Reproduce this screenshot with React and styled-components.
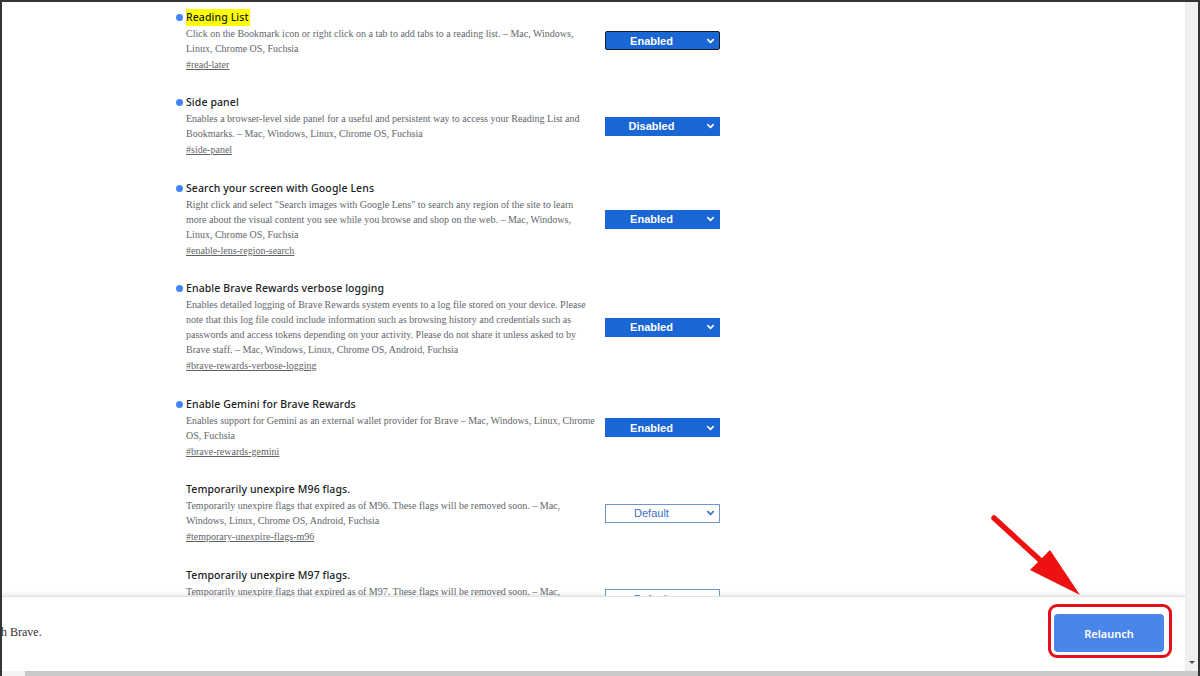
import React from 'react';
import styled, { createGlobalStyle } from 'styled-components';
import { ChevronDown } from 'lucide-react';

const GlobalStyle = createGlobalStyle`
  html, body {
    margin: 0;
    padding: 0;
    background: #ffffff;
  }
`;

const Window = styled.div`
  width: 1200px;
  height: 676px;
  box-sizing: border-box;
  border-top: 2px solid #343434;
  border-left: 2px solid #343434;
  border-right: 2px solid #343434;
  display: flex;
  flex-direction: column;
  overflow: hidden;
  position: relative;
  background: #ffffff;
`;

const Body = styled.div`
  flex: 1;
  min-height: 0;
  display: flex;
`;

const Page = styled.div`
  flex: 1;
  min-width: 0;
  display: flex;
  flex-direction: column;
`;

const FlagList = styled.div`
  flex: 1;
  min-height: 0;
  overflow: hidden;
  padding: 6.5px 0 0 184px;
  display: flex;
  flex-direction: column;
  gap: 22.5px;
`;

const Flag = styled.div`
  display: grid;
  grid-template-columns: 410px 115px;
  column-gap: 9px;
  grid-template-areas:
    "title ."
    "desc select"
    "link .";
`;

const Title = styled.div`
  grid-area: title;
  position: relative;
  font-family: "Noto Sans", sans-serif;
  font-size: 10.5px;
  font-weight: 500;
  line-height: 17px;
  letter-spacing: 0.1px;
  color: #202124;

  ${(p) => p.$active && `
    &::before {
      content: "";
      position: absolute;
      left: -10px;
      top: 5px;
      width: 7px;
      height: 7px;
      border-radius: 50%;
      background: #4285f4;
    }
  `}
`;

const Highlight = styled.span`
  background: #ffff00;
  padding: 1px 1px 2px 0;
`;

const Description = styled.div`
  grid-area: desc;
  font-family: "Liberation Serif", serif;
  font-size: 10px;
  line-height: 15px;
  color: #62666b;
`;

const Link = styled.a`
  grid-area: link;
  justify-self: start;
  margin-top: 1px;
  font-family: "Liberation Serif", serif;
  font-size: 10px;
  line-height: 15px;
  color: #5f6368;
  text-decoration: underline;
`;

const Select = styled.div`
  grid-area: select;
  align-self: center;
  box-sizing: border-box;
  height: 19px;
  display: flex;
  align-items: center;
  position: relative;
  padding-right: 22px;
  font-family: "Liberation Sans", Arial, sans-serif;
  font-size: 11px;
  font-weight: ${(p) => (p.$default ? 400 : 700)};
  color: ${(p) => (p.$default ? '#3b6fc6' : '#ffffff')};
  background: ${(p) => (p.$default ? '#ffffff' : '#1a66d5')};
  border: ${(p) =>
    p.$focused ? '1.5px solid #1b1b24' : p.$default ? '1px solid #6f95d4' : '1px solid #1a66d5'};
  border-radius: ${(p) => (p.$focused ? '2px' : '0')};

  span {
    flex: 1;
    text-align: center;
  }

  svg {
    position: absolute;
    right: 3px;
    top: 50%;
    transform: translateY(-50%);
  }
`;

const BottomBar = styled.div`
  height: 75px;
  flex-shrink: 0;
  box-sizing: border-box;
  border-top: 1px solid #e2e2e2;
  box-shadow: 0 -2px 3px rgba(0, 0, 0, 0.08);
  display: flex;
  align-items: center;
  justify-content: space-between;
  padding-right: 13px;
  background: #ffffff;
`;

const BarText = styled.div`
  font-family: "Liberation Serif", serif;
  font-size: 12px;
  color: #333333;
  margin: -3px 0 0 -1px;
`;

const RedOutline = styled.div`
  border: 3px solid #e3101a;
  border-radius: 9px;
  padding: 7px 5px 3px 3px;
  margin-top: -6px;
`;

const RelaunchButton = styled.button`
  width: 110px;
  height: 38px;
  border: none;
  border-radius: 4px;
  background: #4a86ea;
  color: #ffffff;
  font-family: "Noto Sans", sans-serif;
  font-size: 11px;
  font-weight: 600;
  cursor: pointer;
`;

const VScroll = styled.div`
  width: 13px;
  flex-shrink: 0;
  background: #f1f1f1;
  border-left: 1px solid #ececec;
  display: flex;
  flex-direction: column;
  justify-content: flex-end;
  align-items: center;
  padding-bottom: 7px;
  box-sizing: border-box;
`;

const ScrollArrow = styled.div`
  width: 0;
  height: 0;
  border-left: 3px solid transparent;
  border-right: 3px solid transparent;
  border-top: 3px solid #505050;
`;

const HScroll = styled.div`
  height: 5px;
  flex-shrink: 0;
  background: #f3f3f3;
  padding-left: 23px;
  display: flex;
`;

const HThumb = styled.div`
  flex: 1;
  background: #c9c9c9;
`;

const Arrow = styled.svg`
  position: absolute;
  left: 983px;
  top: 507px;
  pointer-events: none;
`;

const flags = [
  {
    title: 'Reading List',
    marked: true,
    active: true,
    desc: 'Click on the Bookmark icon or right click on a tab to add tabs to a reading list. – Mac, Windows, Linux, Chrome OS, Fuchsia',
    link: '#read-later',
    value: 'Enabled',
    focused: true,
  },
  {
    title: 'Side panel',
    active: true,
    desc: 'Enables a browser-level side panel for a useful and persistent way to access your Reading List and Bookmarks. – Mac, Windows, Linux, Chrome OS, Fuchsia',
    link: '#side-panel',
    value: 'Disabled',
  },
  {
    title: 'Search your screen with Google Lens',
    active: true,
    desc: 'Right click and select "Search images with Google Lens" to search any region of the site to learn more about the visual content you see while you browse and shop on the web. – Mac, Windows, Linux, Chrome OS, Fuchsia',
    link: '#enable-lens-region-search',
    value: 'Enabled',
  },
  {
    title: 'Enable Brave Rewards verbose logging',
    active: true,
    desc: 'Enables detailed logging of Brave Rewards system events to a log file stored on your device. Please note that this log file could include information such as browsing history and credentials such as passwords and access tokens depending on your activity. Please do not share it unless asked to by Brave staff. – Mac, Windows, Linux, Chrome OS, Android, Fuchsia',
    link: '#brave-rewards-verbose-logging',
    value: 'Enabled',
  },
  {
    title: 'Enable Gemini for Brave Rewards',
    active: true,
    desc: 'Enables support for Gemini as an external wallet provider for Brave – Mac, Windows, Linux, Chrome OS, Fuchsia',
    link: '#brave-rewards-gemini',
    value: 'Enabled',
  },
  {
    title: 'Temporarily unexpire M96 flags.',
    desc: 'Temporarily unexpire flags that expired as of M96. These flags will be removed soon. – Mac, Windows, Linux, Chrome OS, Android, Fuchsia',
    link: '#temporary-unexpire-flags-m96',
    value: 'Default',
  },
  {
    title: 'Temporarily unexpire M97 flags.',
    desc: 'Temporarily unexpire flags that expired as of M97. These flags will be removed soon. – Mac, Windows, Linux, Chrome OS, Android, Fuchsia',
    link: '#temporary-unexpire-flags-m97',
    value: 'Default',
  },
];

const App = () => {
  return (
    <>
      <GlobalStyle />
      <Window>
        <Body>
          <Page>
            <FlagList>
              {flags.map((f) => {
                const isDefault = f.value === 'Default';
                return (
                  <Flag key={f.link}>
                    <Title $active={f.active}>
                      {f.marked ? <Highlight>{f.title}</Highlight> : f.title}
                    </Title>
                    <Description>{f.desc}</Description>
                    <Link href={f.link}>{f.link}</Link>
                    <Select $default={isDefault} $focused={f.focused}>
                      <span>{f.value}</span>
                      <ChevronDown size={11} strokeWidth={3.5} />
                    </Select>
                  </Flag>
                );
              })}
            </FlagList>
            <BottomBar>
              <BarText>h Brave.</BarText>
              <RedOutline>
                <RelaunchButton>Relaunch</RelaunchButton>
              </RedOutline>
            </BottomBar>
          </Page>
          <VScroll>
            <ScrollArrow />
          </VScroll>
        </Body>
        <HScroll>
          <HThumb />
        </HScroll>
        <Arrow width="100" height="92" viewBox="0 0 100 92">
          <line x1="9" y1="9" x2="56" y2="52" stroke="#ee1111" strokeWidth="5.5" strokeLinecap="round" />
          <polygon points="45,61 65,41 95,86" fill="#ee1111" />
        </Arrow>
      </Window>
    </>
  );
};

export default App;
